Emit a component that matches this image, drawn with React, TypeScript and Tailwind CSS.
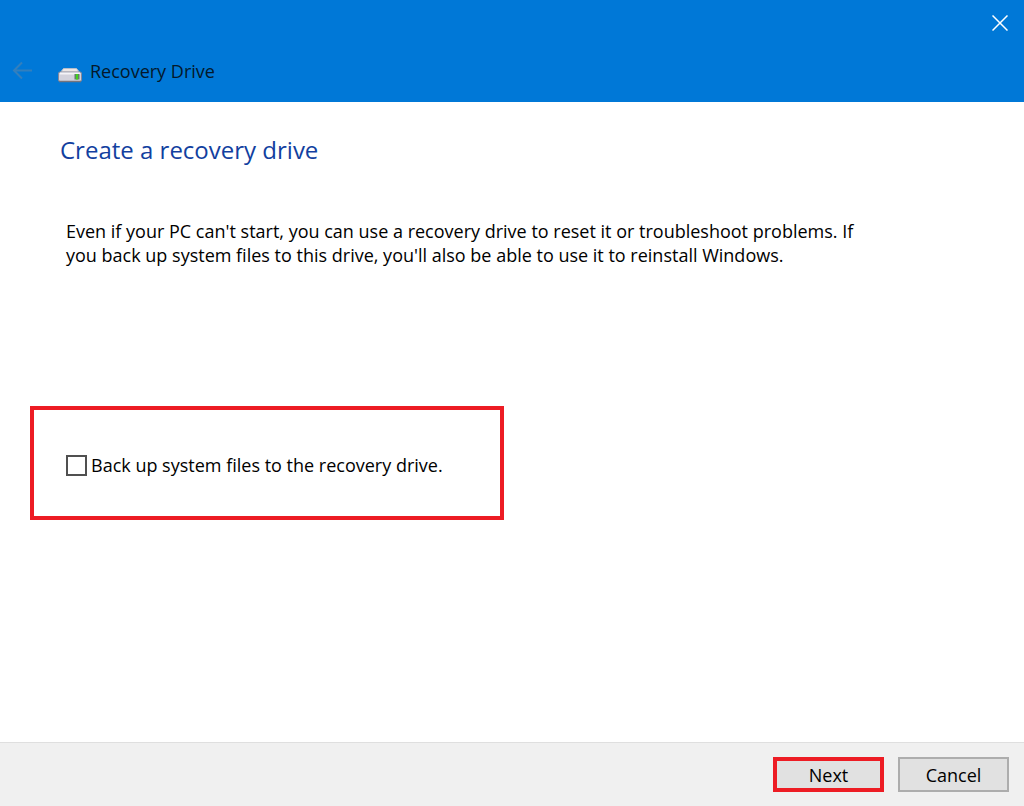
import { useState } from 'react'

/** Small external drive glyph shown beside the window title */
function DriveIcon() {
  return (
    <svg className="h-6 w-6" viewBox="0 0 24 24" fill="none" aria-hidden="true">
      <path d="M5.5 9.5h13l4 5h-21z" fill="#ece6e4" stroke="#b3bccb" strokeWidth="1" strokeLinejoin="round" />
      <rect x="0.5" y="13" width="23" height="9.5" rx="1.5" fill="#d3d2dc" stroke="#85879a" />
      <path d="M2 14.5h20" stroke="#f4f3f7" strokeWidth="2" />
      <path d="M1 22.5h22" stroke="#77747c" strokeWidth="1.5" />
      <rect x="16.5" y="15" width="5" height="5.5" fill="#62806a" />
      <rect x="18" y="15" width="2" height="5.5" fill="#44d21d" />
    </svg>
  )
}

function BackArrow() {
  return (
    <svg className="h-5 w-5" viewBox="0 0 20 20" fill="none" stroke="currentColor" strokeWidth="2" aria-hidden="true">
      <path d="M20 9.5H2M10 1.5l-8 8 8 8" />
    </svg>
  )
}

function CloseIcon() {
  return (
    <svg className="h-4 w-4" viewBox="0 0 16 16" fill="none" stroke="currentColor" strokeWidth="1.5" aria-hidden="true">
      <path d="M0.5 0.5l15 15M15.5 0.5l-15 15" />
    </svg>
  )
}

function TitleBar() {
  return (
    <header className="flex flex-col bg-[#0078d7]">
      <div className="flex justify-end px-4 pt-[15px]">
        <button type="button" aria-label="Close" className="text-white">
          <CloseIcon />
        </button>
      </div>
      <div className="flex items-center px-3 pt-7 pb-[19px]">
        <button type="button" aria-label="Back" disabled className="text-[#337fbd]">
          <BackArrow />
        </button>
        <div className="flex items-center gap-2 pl-[26px]">
          <DriveIcon />
          <span className="text-lg leading-6 text-[#04182b]">Recovery Drive</span>
        </div>
      </div>
    </header>
  )
}

export default function App() {
  const [backup, setBackup] = useState(false)

  return (
    <div className="flex min-h-screen flex-col bg-white font-['Open_Sans','Noto_Sans',sans-serif] text-lg leading-6 text-black">
      <TitleBar />

      <main className="flex-1 px-[30px] pt-8">
        <h1 className="pl-[30px] text-2xl text-[#123f9f]">Create a recovery drive</h1>
        <p className="mt-[53px] max-w-[830px] pl-9">
          Even if your PC can't start, you can use a recovery drive to reset it or troubleshoot problems. If you back up system
          files to this drive, you'll also be able to use it to reinstall Windows.
        </p>
        <div className="mt-[139px] w-[474px] max-w-full border-4 border-[#ed1c24] px-8 pt-[43px] pb-[39px]">
          <label className="flex items-center gap-1">
            <input
              type="checkbox"
              checked={backup}
              onChange={(e) => setBackup(e.target.checked)}
              className="h-[21px] w-[21px] shrink-0 appearance-none border-2 border-[#505050] bg-white checked:bg-[#333333]"
            />
            Back up system files to the recovery drive.
          </label>
        </div>
      </main>

      <footer className="flex justify-end gap-[14px] border-t border-[#dfdfdf] bg-[#f0f0f0] px-[15px] py-[14px]">
        <button type="button" className="h-[35px] w-[111px] border-4 border-[#ed1c24] bg-[#e1e1e1]">
          Next
        </button>
        <button type="button" className="h-[35px] w-[111px] border-2 border-[#adadad] bg-[#e1e1e1]">
          Cancel
        </button>
      </footer>
    </div>
  )
}
